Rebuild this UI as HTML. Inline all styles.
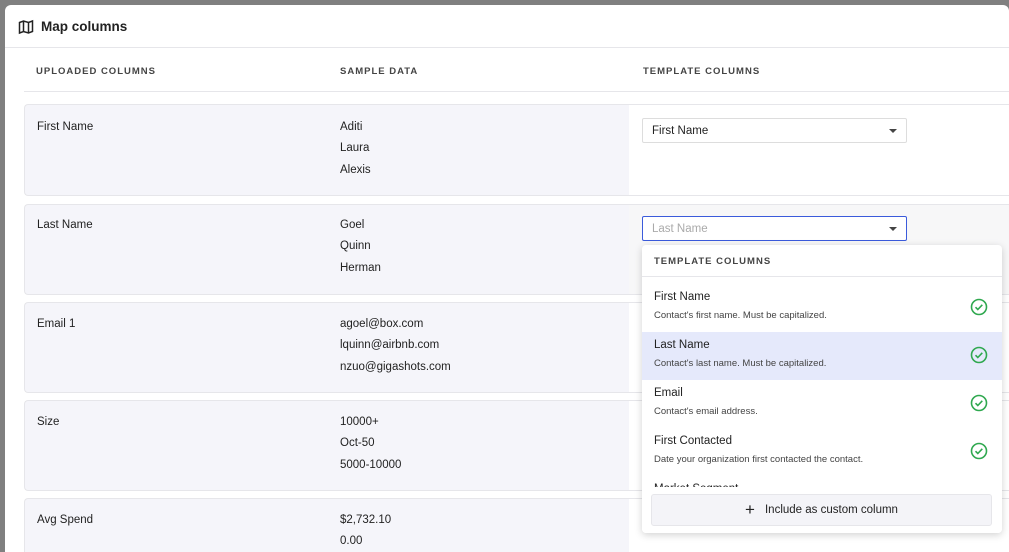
<!DOCTYPE html>
<html style="width:1009px;height:552px;overflow:hidden"><head><style>
*{box-sizing:border-box;margin:0;padding:0}
body{width:1009px;height:552px;overflow:hidden;background:#808080;font-family:"Liberation Sans",sans-serif;color:#222;position:relative}
.modal{position:absolute;left:5px;top:5px;width:1004px;height:547px;background:#fff;border-radius:6px 6px 0 0;overflow:hidden}
.hdr{position:absolute;left:0;top:0;right:0;height:43px;border-bottom:1px solid #e6e6ea}
.hdr span{position:absolute;left:36px;top:14px;font-size:13.5px;font-weight:bold;color:#222}
.hdr svg{position:absolute;left:13px;top:14px}
.ch{position:absolute;top:61px;font-size:9.5px;font-weight:bold;letter-spacing:1px;color:#444}
.hl{position:absolute;left:19px;right:0;top:86px;border-top:1px solid #e6e6ea}
.row{position:absolute;left:24px;width:985px;border:1px solid #e6e6ea;border-right:none;border-radius:4px 0 0 4px;background:#f5f5fa;overflow:hidden}
.row .r{position:absolute;left:604px;top:0;bottom:0;right:0;background:#fff}
.row .r.g{background:#f7f7f8}
.t{position:absolute;font-size:11.5px;color:#222}
.sel{position:absolute;width:265px;height:25px;border:1px solid #ddd;background:#fff;font-size:11.5px;padding:6px 9px;border-radius:2px}
.sel:after{content:"";position:absolute;right:9px;top:10px;border-left:4px solid transparent;border-right:4px solid transparent;border-top:4px solid #444}
.dd{position:absolute;left:642px;top:245px;width:360px;height:288px;background:#fff;border-radius:4px;box-shadow:0 2px 8px rgba(0,0,0,.18);overflow:hidden}
.dd .h{position:absolute;left:12px;top:11px;font-size:9.5px;font-weight:bold;letter-spacing:1px;color:#444}
.dd .line{position:absolute;left:0;right:0;top:31px;border-top:1px solid #e6e6ea}
.it{position:absolute;left:0;right:0;height:48px}
.it b{position:absolute;left:12px;top:7px;font-weight:normal;font-size:11.5px;color:#222}
.it i{position:absolute;left:12px;top:26px;font-style:normal;font-size:9.5px;color:#444}
.it svg{position:absolute;left:328px;top:14px}
.btn{position:absolute;left:9px;top:249px;width:341px;height:32px;background:#f4f4f8;border:1px solid #e6e6ea;border-radius:3px;font-size:11.5px;text-align:center;line-height:30px;color:#222}
</style></head><body>
<div class="modal">
<div class="hdr"><svg width="16" height="16" viewBox="0 0 16 16" fill="none" stroke="#222" stroke-width="1.5"><path d="M1.5 3.5l4-1.5 5 1.5 4-1.5v10.5l-4 1.5-5-1.5-4 1.5z M5.5 2v10.5 M10.5 3.5V14"/></svg><span>Map columns</span></div>
<div class="ch" style="left:31px">UPLOADED COLUMNS</div>
<div class="ch" style="left:335px">SAMPLE DATA</div>
<div class="ch" style="left:638px">TEMPLATE COLUMNS</div>
<div class="hl"></div>
</div>
<div class="row" style="top:104px;height:92px"><div class="r"></div></div>
<div class="row" style="top:204px;height:91px"><div class="r g"></div></div>
<div class="row" style="top:302px;height:91px"><div class="r"></div></div>
<div class="row" style="top:400px;height:91px"><div class="r"></div></div>
<div class="row" style="top:498px;height:54px;border-bottom:none;border-radius:4px 0 0 0"><div class="r"></div></div>
<div class="t" style="left:37px;top:121px">First Name</div>
<div class="t" style="left:340px;top:121px">Aditi</div><div class="t" style="left:340px;top:142px">Laura</div><div class="t" style="left:340px;top:164px">Alexis</div>
<div class="t" style="left:37px;top:219px">Last Name</div>
<div class="t" style="left:340px;top:219px">Goel</div><div class="t" style="left:340px;top:240px">Quinn</div><div class="t" style="left:340px;top:262px">Herman</div>
<div class="t" style="left:37px;top:318px">Email 1</div>
<div class="t" style="left:340px;top:318px">agoel@box.com</div><div class="t" style="left:340px;top:339px">lquinn@airbnb.com</div><div class="t" style="left:340px;top:361px">nzuo@gigashots.com</div>
<div class="t" style="left:37px;top:416px">Size</div>
<div class="t" style="left:340px;top:416px">10000+</div><div class="t" style="left:340px;top:437px">Oct-50</div><div class="t" style="left:340px;top:459px">5000-10000</div>
<div class="t" style="left:37px;top:514px">Avg Spend</div>
<div class="t" style="left:340px;top:514px">$2,732.10</div><div class="t" style="left:340px;top:535px">0.00</div>
<div class="sel" style="left:642px;top:118px">First Name</div>
<div class="sel" style="left:642px;top:216px;border:1.5px solid #3b5bdb;color:#aaa">Last Name</div>
<div class="dd">
<div class="h">TEMPLATE COLUMNS</div><div class="line"></div>
<div class="it" style="top:39px"><b>First Name</b><i>Contact's first name. Must be capitalized.</i><svg width="18" height="18" viewBox="0 0 18 18" fill="none" stroke="#2fa84f" stroke-width="1.6"><circle cx="9" cy="9" r="7.5"/><path d="M5.5 9.2l2.3 2.3 4.5-4.7"/></svg></div>
<div class="it" style="top:87px;background:#e5e9fb"><b>Last Name</b><i>Contact's last name. Must be capitalized.</i><svg width="18" height="18" viewBox="0 0 18 18" fill="none" stroke="#2fa84f" stroke-width="1.6"><circle cx="9" cy="9" r="7.5"/><path d="M5.5 9.2l2.3 2.3 4.5-4.7"/></svg></div>
<div class="it" style="top:135px"><b>Email</b><i>Contact's email address.</i><svg width="18" height="18" viewBox="0 0 18 18" fill="none" stroke="#2fa84f" stroke-width="1.6"><circle cx="9" cy="9" r="7.5"/><path d="M5.5 9.2l2.3 2.3 4.5-4.7"/></svg></div>
<div class="it" style="top:183px"><b>First Contacted</b><i>Date your organization first contacted the contact.</i><svg width="18" height="18" viewBox="0 0 18 18" fill="none" stroke="#2fa84f" stroke-width="1.6"><circle cx="9" cy="9" r="7.5"/><path d="M5.5 9.2l2.3 2.3 4.5-4.7"/></svg></div>
<div class="it" style="top:231px"><b>Market Segment</b></div>
<div style="position:absolute;left:0;right:0;top:242px;height:50px;background:#fff"></div>
<div class="btn"><span style="font-size:17px;vertical-align:-2px;margin-right:10px">+</span>Include as custom column</div>
</div>
</body></html>
